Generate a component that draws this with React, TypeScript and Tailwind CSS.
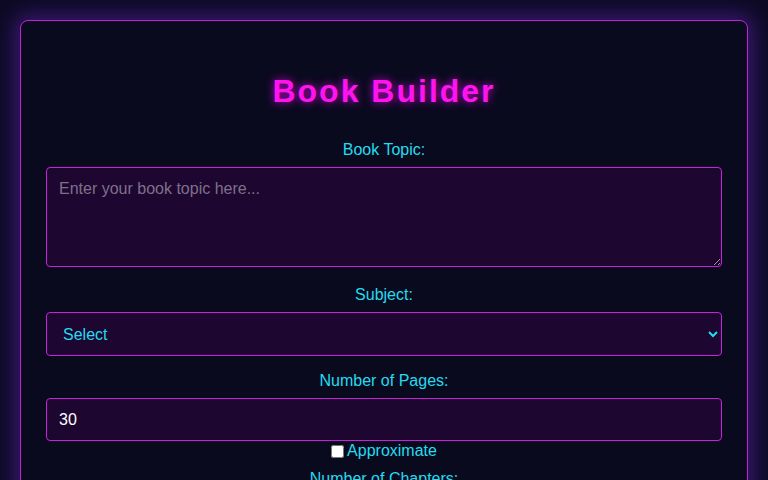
import { useState } from "react"

const FONT = { fontFamily: '"Liberation Sans", Arial, sans-serif' }

export default function App() {
  const [pages, setPages] = useState("30")
  return (
    <div className="min-h-screen bg-[#0c0a24] p-5" style={FONT}>
      <div className="rounded-lg border border-[#c51fd6] bg-[#0a0a1f] px-[25px] pb-8 pt-[52px] shadow-[0_0_20px_6px_rgba(110,40,200,0.45)]">
        <h1 className="mb-[31px] text-center text-[32px] font-bold leading-[37px] tracking-[2px] text-[#ff14f0] [text-shadow:0_0_8px_rgba(255,0,255,0.75)]">
          Book Builder
        </h1>

        <label className="mb-[8px] block text-center text-base leading-[18px] text-[#22dcef]">
          Book Topic:
        </label>
        <textarea
          placeholder="Enter your book topic here..."
          className="block h-[100px] w-full resize-y rounded border border-[#c920da] bg-[#1d0630] px-3 py-[9px] text-base text-white placeholder:text-[#7f7088] focus:outline-none"
        />

        <label className="mb-[8px] mt-[19px] block text-center text-base leading-[18px] text-[#22dcef]">
          Subject:
        </label>
        <select className="block h-[44px] w-full rounded border border-[#c920da] bg-[#1d0630] px-3 text-base text-[#22dcef] focus:outline-none">
          <option>Select</option>
          <option>Fiction</option>
          <option>Non-fiction</option>
        </select>

        <label className="mb-[8px] mt-[16px] block text-center text-base leading-[18px] text-[#22dcef]">
          Number of Pages:
        </label>
        <input
          type="number"
          value={pages}
          onChange={(e) => setPages(e.target.value)}
          className="block h-[43px] w-full rounded border border-[#c920da] bg-[#1d0630] px-3 text-base text-white focus:outline-none"
        />
        <div className="mt-px flex items-center justify-center text-base leading-[18px] text-[#22dcef]">
          <label className="flex items-center">
            <input type="checkbox" className="mr-[3px] size-[13px]" />
            Approximate
          </label>
        </div>

        <label className="mb-[8px] mt-[10px] block text-center text-base leading-[18px] text-[#22dcef]">
          Number of Chapters:
        </label>
        <input
          type="number"
          defaultValue="5"
          className="block h-[43px] w-full rounded border border-[#c920da] bg-[#1d0630] px-3 text-base text-white focus:outline-none"
        />
      </div>
    </div>
  )
}
